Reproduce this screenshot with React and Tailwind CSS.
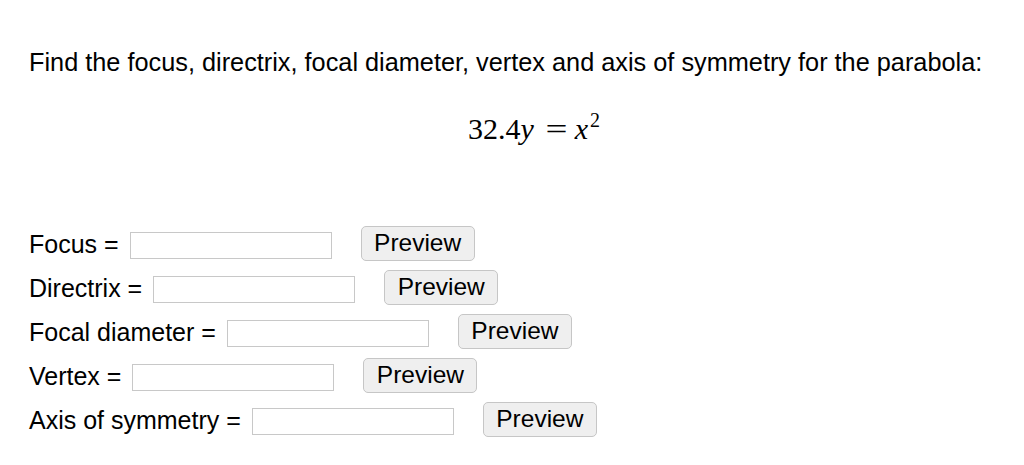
import React from 'react';

const rows = [
    { label: 'Focus =' },
    { label: 'Directrix =' },
    { label: 'Focal diameter =' },
    { label: 'Vertex =' },
    { label: 'Axis of symmetry =' },
];

const Row = ({ label }) => (
    <div className="flex items-center h-[44px]">
        <span className="text-[25px] leading-none text-black">{label}</span>
        <input
            type="text"
            className="ml-[11px] mt-[3px] w-[202px] h-[27px] border border-[#c8c8c8] bg-white outline-none"
        />
        <button className="ml-[29px] mb-[2px] w-[114px] h-[35px] rounded-[5px] border border-[#c6c6c6] bg-[#efefef] text-[24.5px] leading-none text-black">
            Preview
        </button>
    </div>
);

const App = () => {
    return (
        <div className="w-[1024px] h-[465px] bg-white px-[29px] pt-[47px]" style={{ fontFamily: '"Liberation Sans", Arial, sans-serif' }}>
            <p className="text-[25.3px] leading-[30px] text-black whitespace-nowrap">
                Find the focus, directrix, focal diameter, vertex and axis of symmetry for the parabola:
            </p>
            <div className="flex justify-center items-baseline mt-[37px] pl-[44px] h-[29px] text-[30px] leading-none text-black" style={{ fontFamily: '"Liberation Serif", "DejaVu Serif", serif' }}>
                <span>32.4<i>y</i></span>
                <span className="inline-block ml-[14px] mr-[10px] scale-x-[1.3]">=</span>
                <span>
                    <i>x</i>
                    <span className="inline-block align-baseline text-[20px] ml-[2px] -translate-y-[12px]">2</span>
                </span>
            </div>
            <div className="mt-[79px] flex flex-col">
                {rows.map((r) => (
                    <Row key={r.label} label={r.label} />
                ))}
            </div>
        </div>
    );
};

export default App;
